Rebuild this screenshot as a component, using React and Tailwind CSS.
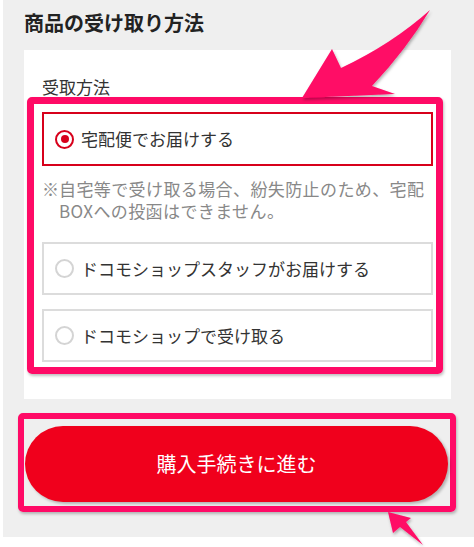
import React from 'react';

const font = { fontFamily: '"Noto Sans CJK JP", "Noto Sans", sans-serif' };

const Radio = ({ checked }) =>
  checked ? (
    <span className="flex h-[19px] w-[19px] shrink-0 items-center justify-center rounded-full border-[2.5px] border-[#d7001b]">
      <span className="h-[8px] w-[8px] rounded-full bg-[#d7001b]" />
    </span>
  ) : (
    <span className="h-[19px] w-[19px] shrink-0 rounded-full border-2 border-[#d4d4d4]" />
  );

const Option = ({ label, checked }) => (
  <div
    className={`flex items-center gap-[7px] pl-[11px] border-2 ${
      checked ? 'h-[54px] border-[#d7001b]' : 'h-[53px] border-[#dcdcdc]'
    }`}
  >
    <Radio checked={checked} />
    <span className="text-[17px] leading-[22px] text-[#333]">{label}</span>
  </div>
);

export default function App() {
  return (
    <div className="relative w-[474px] h-[547px] overflow-hidden bg-white" style={font}>
      <div className="ml-[3px] bg-[#efefef] pl-[21px] pr-[23px] pt-[9px] pb-[25px]">
        <h2 className="text-[20px] leading-[28px] font-bold text-[#222] mb-[13px]">商品の受け取り方法</h2>

        {/* card */}
        <div className="bg-white px-[18px] pt-[27px] pb-[25px]">
          <p className="text-[17px] leading-[20px] text-[#333]">受取方法</p>

          {/* highlighted group */}
          <div className="-ml-[15px] -mr-[10px] border-[7px] border-[#ff0a66] rounded-[5px] pl-[8px] pr-[3px] pt-[8px] pb-[5px] shadow-[1px_2px_3px_rgba(0,0,0,0.25)]">
            <Option label="宅配便でお届けする" checked />
            <div className="flex pt-[12px] pb-[20px] text-[17px] leading-[22px] tracking-[0.4px] text-[#888] whitespace-nowrap">
              <span className="w-[17px] shrink-0">※</span>
              <span>
                自宅等で受け取る場合、紛失防止のため、宅配
                <br />
                BOXへの投函はできません。
              </span>
            </div>
            <div className="flex flex-col gap-[14px]">
              <Option label="ドコモショップスタッフがお届けする" />
              <Option label="ドコモショップで受け取る" />
            </div>
          </div>
        </div>

        {/* button */}
        <div className="mt-[14px] -ml-[6px] -mr-[5px] border-[6px] border-[#ff0a66] rounded-[5px] pl-[1px] pr-[2px] pt-[7px] pb-[4px] shadow-[1px_2px_3px_rgba(0,0,0,0.25)]">
          <button className="flex h-[76px] w-full items-center justify-center rounded-full bg-[#f0001c] text-[20px] text-white shadow-[2px_2px_3px_rgba(0,0,0,0.25)]">
            購入手続きに進む
          </button>
        </div>
      </div>

      {/* annotation arrows */}
      <svg className="pointer-events-none absolute left-0 top-0" width="474" height="547" viewBox="0 0 474 547">
        <defs>
          <filter id="sh" x="-20%" y="-20%" width="140%" height="140%">
            <feDropShadow dx="1" dy="2" stdDeviation="1.5" floodColor="#000" floodOpacity="0.3" />
          </filter>
        </defs>
        <path
          d="M430,10 Q392,44 341,68 L332,49 L302,98 L395,94 L372,86 Q406,50 430,10 Z"
          fill="#ff0a66"
          filter="url(#sh)"
        />
        <path
          d="M388,512 L411,518 L406,522 L423,545 L400,527 L393,533 Z"
          fill="#ff0a66"
          filter="url(#sh)"
        />
      </svg>
    </div>
  );
}
